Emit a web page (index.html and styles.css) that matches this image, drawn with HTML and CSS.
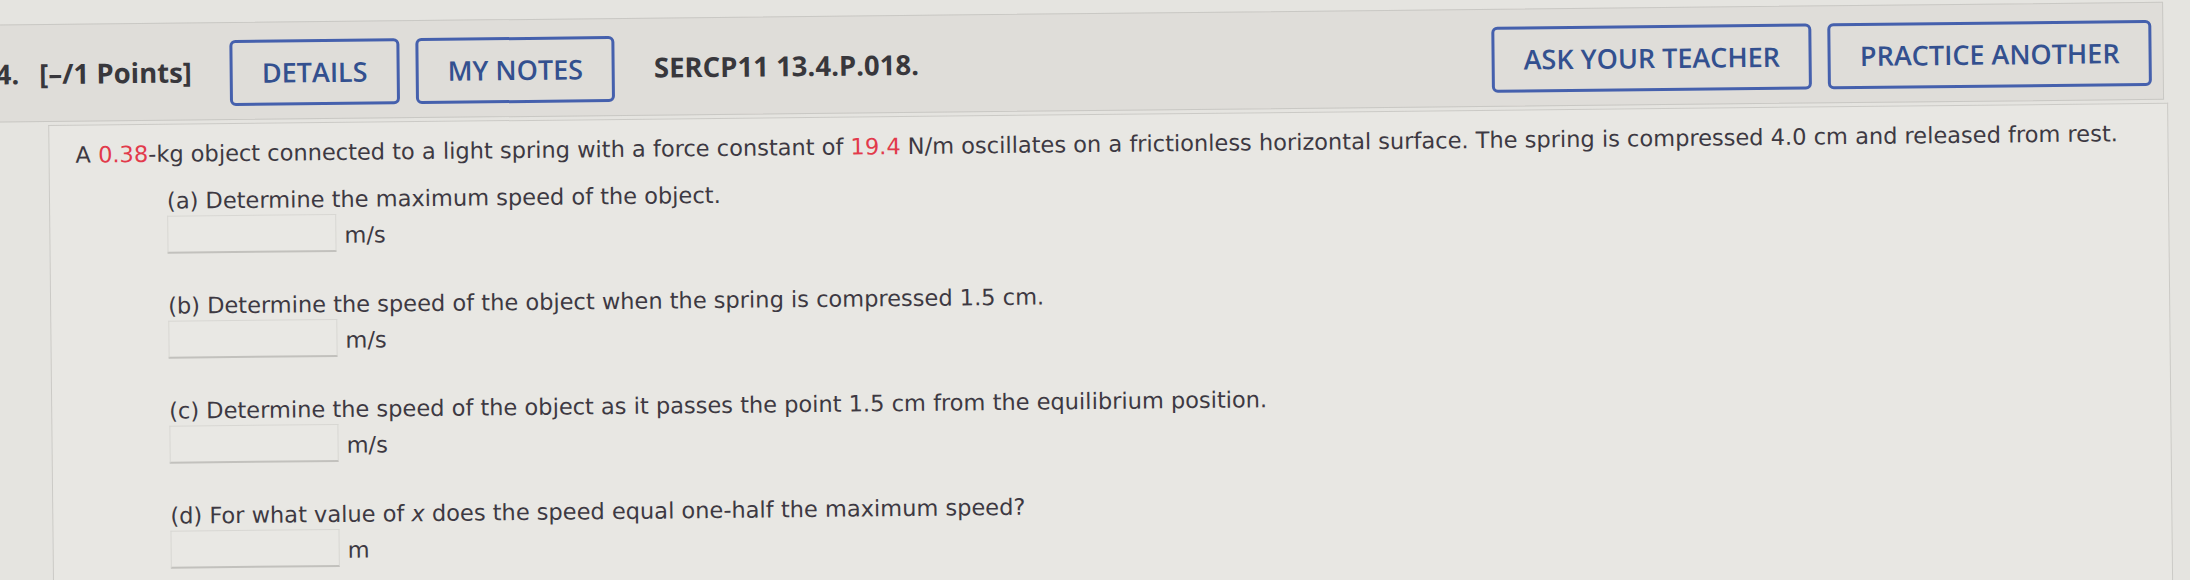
FILE: index.html
```html
<!DOCTYPE html>
<html lang="en">
<head>
<meta charset="utf-8">
<title>SERCP11 13.4.P.018.</title>
<link rel="stylesheet" href="styles.css">
</head>
<body>
<div class="page">
  <div class="qheader">
    <span class="qnum">4.</span>
    <span class="points">[&ndash;/1 Points]</span>
    <div class="btn-group">
      <button class="btn">DETAILS</button>
      <button class="btn">MY NOTES</button>
    </div>
    <span class="qcode">SERCP11 13.4.P.018.</span>
    <div class="btn-group right">
      <button class="btn">ASK YOUR TEACHER</button>
      <button class="btn">PRACTICE ANOTHER</button>
    </div>
  </div>
  <div class="qbody">
    <p class="stem">A <span class="red">0.38</span>-kg object connected to a light spring with a force constant of <span class="red">19.4</span> N/m oscillates on a frictionless horizontal surface. The spring is compressed 4.0 cm and released from rest.</p>
    <div class="part">
      <p class="ptext">(a) Determine the maximum speed of the object.</p>
      <div class="answer"><span class="box"></span><span class="unit">m/s</span></div>
    </div>
    <div class="part">
      <p class="ptext">(b) Determine the speed of the object when the spring is compressed 1.5 cm.</p>
      <div class="answer"><span class="box"></span><span class="unit">m/s</span></div>
    </div>
    <div class="part">
      <p class="ptext">(c) Determine the speed of the object as it passes the point 1.5 cm from the equilibrium position.</p>
      <div class="answer"><span class="box"></span><span class="unit">m/s</span></div>
    </div>
    <div class="part">
      <p class="ptext">(d) For what value of <i>x</i> does the speed equal one-half the maximum speed?</p>
      <div class="answer"><span class="box"></span><span class="unit">m</span></div>
    </div>
  </div>
</div>
</body>
</html>
```
FILE: styles.css
```css
html, body {
  margin: 0;
  padding: 0;
  background: #e5e4e0;
  overflow: hidden;
}
.page {
  width: 2190px;
  height: 580px;
  padding-top: 13px;
  box-sizing: border-box;
  transform: rotate(-0.6deg);
  transform-origin: 1095px 290px;
}
.qheader {
  margin-left: -10px;
  width: 2176px;
  height: 98px;
  box-sizing: border-box;
  border: 1px solid #c9c8c4;
  background: #dfddd9;
  display: flex;
  align-items: center;
  padding-left: 7px;
  padding-right: 11px;
  font-family: "Open Sans", "Liberation Sans", sans-serif;
  font-size: 27.5px;
  color: #38373c;
}
.qnum {
  font-weight: 700;
  margin-right: 20px;
}
.points {
  font-weight: 700;
  margin-right: 38px;
}
.btn-group {
  display: flex;
  gap: 16px;
}
.btn-group.right {
  margin-left: auto;
}
.btn {
  font-family: "Open Sans", "Liberation Sans", sans-serif;
  font-size: 27px;
  font-weight: 600;
  color: #33508f;
  background: transparent;
  border: 3px solid #4560ad;
  border-radius: 6px;
  height: 66px;
  padding: 0 29px;
  margin-top: 3px;
}
.qcode {
  font-weight: 700;
  margin-left: 39px;
}
.qbody {
  margin-left: 50px;
  margin-top: 3px;
  width: 2120px;
  height: 600px;
  box-sizing: border-box;
  border-left: 1px solid #cbcac6;
  border-top: 1px solid #cbcac6;
  border-right: 1px solid #cbcac6;
  background: #e8e7e3;
  padding: 14px 0 0 26px;
  font-family: "DejaVu Sans", Verdana, sans-serif;
  font-size: 22.5px;
  color: #3d3942;
}
.stem {
  margin: 0;
  line-height: 30px;
}
.red {
  color: #e23a4b;
}
.part {
  margin-left: 91px;
  margin-top: 17px;
}
.part + .part {
  margin-top: 37px;
}
.ptext {
  margin: 0;
  line-height: 30px;
}
.answer {
  display: flex;
  align-items: center;
  height: 38px;
}
.box {
  width: 169px;
  height: 38px;
  box-sizing: border-box;
  border: 1px solid #d8d7d3;
  border-bottom: 2px solid #c2c1bd;
  background: #e9e8e4;
}
.unit {
  margin-left: 8px;
  position: relative;
  top: 2px;
}
```
